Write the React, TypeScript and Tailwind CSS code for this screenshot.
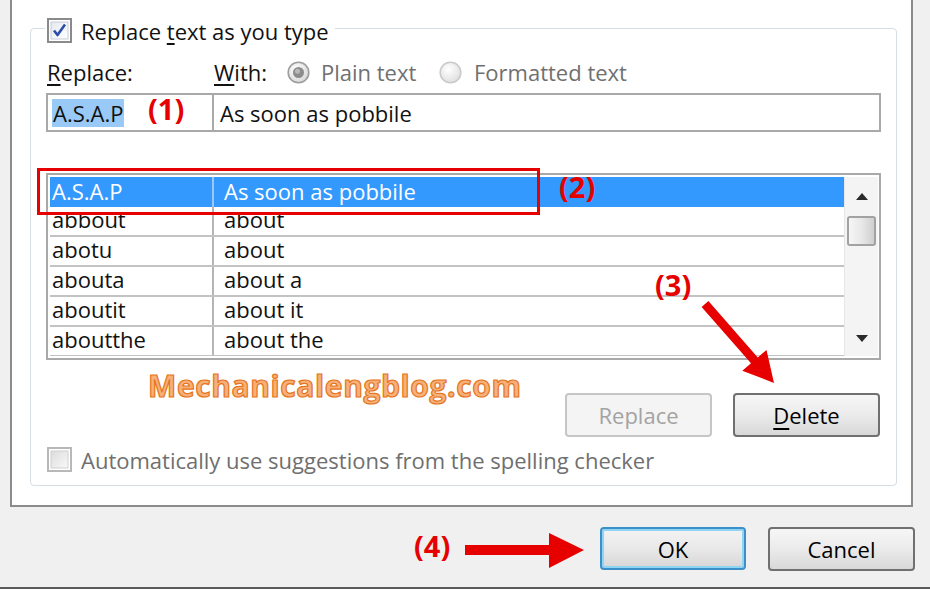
import React from "react";

// ── Data ─────────────────────────────────────────────────────────────

const rows: [string, string][] = [
  ["A.S.A.P", "As soon as pobbile"],
  ["abbout", "about"],
  ["abotu", "about"],
  ["abouta", "about a"],
  ["aboutit", "about it"],
  ["aboutthe", "about the"],
];

// ── Small controls ───────────────────────────────────────────────────

function CheckBox({ checked }: { checked?: boolean }) {
  return (
    <svg width="25" height="25" viewBox="0 0 25 25" className="shrink-0">
      <defs>
        <linearGradient id={checked ? "cbOn" : "cbOff"} x1="0" y1="0" x2="1" y2="1">
          <stop offset="0" stopColor={checked ? "#e4e9ef" : "#dcdcdc"} />
          <stop offset="1" stopColor={checked ? "#ffffff" : "#f8f8f8"} />
        </linearGradient>
      </defs>
      <rect x="1" y="1" width="23" height="23" fill="#fff" stroke={checked ? "#8a8a8a" : "#b8b8b8"} strokeWidth="2" />
      <rect x="4" y="4" width="17" height="17" fill={checked ? "url(#cbOn)" : "url(#cbOff)"} stroke={checked ? "#c5cdd8" : "#d0d0d0"} strokeWidth="1" />
      {checked && (
        <path d="M7 12.5 L10.5 17 L18 6.5" fill="none" stroke="#2c4ea8" strokeWidth="2.6" strokeLinejoin="round" />
      )}
    </svg>
  );
}

function Radio({ checked }: { checked?: boolean }) {
  return (
    <svg width="23" height="23" viewBox="0 0 23 23" className="shrink-0">
      <defs>
        <radialGradient id={checked ? "rOn" : "rOff"} cx="0.4" cy="0.35" r="0.7">
          <stop offset="0" stopColor="#ffffff" />
          <stop offset="1" stopColor={checked ? "#d6d6d6" : "#dedede"} />
        </radialGradient>
      </defs>
      <circle cx="11.5" cy="11.5" r="10.3" fill={checked ? "url(#rOn)" : "url(#rOff)"} stroke={checked ? "#9d9d9d" : "#cacaca"} strokeWidth="1.6" />
      {checked && (
        <>
          <circle cx="11.5" cy="11.5" r="5.5" fill="#8c8c8c" />
          <circle cx="10.5" cy="10.3" r="2.5" fill="#b9b9b9" />
        </>
      )}
    </svg>
  );
}

function Button({
  label,
  under,
  variant = "normal",
}: {
  label: string;
  under?: boolean;
  variant?: "normal" | "disabled" | "default";
}) {
  const first = label.slice(0, 1);
  const rest = label.slice(1);
  if (variant === "disabled") {
    return (
      <div className="flex h-[44px] w-[147px] items-center justify-center rounded-[4px] border-2 border-[#c4c6c8] bg-[#f4f4f4] text-[#a3a3a3]">
        {label}
      </div>
    );
  }
  if (variant === "default") {
    return (
      <div className="flex h-[43px] w-[146px] items-center justify-center rounded-[4px] border-2 border-[#3d8fc8] bg-gradient-to-b from-[#f3f3f3] via-[#e9e9e9] to-[#d6d6d6] text-black shadow-[inset_0_0_0_2px_#8fd3f5]">
        {label}
      </div>
    );
  }
  return (
    <div className="flex h-[44px] w-[147px] items-center justify-center rounded-[4px] border-2 border-[#707070] bg-gradient-to-b from-[#f6f6f6] via-[#ebebeb] to-[#d8d8d8] text-black">
      {under ? (
        <span>
          <span className="underline decoration-2 underline-offset-[4px]">{first}</span>
          {rest}
        </span>
      ) : (
        label
      )}
    </div>
  );
}

// ── Component ────────────────────────────────────────────────────────

export default function App() {
  return (
    <div className="relative h-[589px] w-[930px] overflow-hidden bg-[#f0f0f0] font-['Open_Sans',sans-serif] text-[22px] leading-none text-[#111]">
      {/* ════════════ Dialog panel ════════════ */}
      <div className="ml-[10px] h-[507px] w-[903px] border-x-2 border-b-2 border-[#8b8b8b] bg-white pl-[18px] pt-[28px]">
        {/* Group box */}
        <div className="relative flex h-[458px] w-[867px] flex-col rounded-[4px] border border-[#d5dde5] px-[15px] pt-[32px]">
          {/* Legend */}
          <div className="absolute left-[14px] top-[-11px] flex items-center gap-[9px] bg-white pl-[2px] pr-[6px]">
            <CheckBox checked />
            <span>
              Replace <span className="underline underline-offset-[3px]">t</span>ext as you type
            </span>
          </div>

          {/* Replace / With labels */}
          <div className="flex h-[22px] items-center">
            <span className="w-[168px] pl-px">
              <span className="underline underline-offset-[3px]">R</span>eplace:
            </span>
            <span className="w-[73px]">
              <span className="underline underline-offset-[3px]">W</span>ith:
            </span>
            <Radio checked />
            <span className="ml-[11px] w-[118px] text-[#707070]">Plain text</span>
            <Radio />
            <span className="ml-[12px] text-[#707070]">Formatted text</span>
          </div>

          {/* Input boxes */}
          <div className="mt-[10px] flex h-[39px] w-[835px] border-2 border-[#a9a9a9]">
            <div className="flex w-[166px] items-center border-r-2 border-[#a9a9a9] pl-[4px]">
              <span className="bg-[#99c9f6] px-px py-[3px]">A.S.A.P</span>
            </div>
            <div className="flex flex-1 items-center pl-[6px]">As soon as pobbile</div>
          </div>

          {/* Entries list */}
          <div className="mt-[41px] flex h-[187px] w-[835px] border-2 border-[#a9a9a9] py-[2px] pl-[2px] pr-px">
            <div className="flex flex-1 flex-col overflow-hidden">
              {rows.map(([from, to], i) =>
                i === 0 ? (
                  <div key={from} className="flex h-[30px] shrink-0 bg-[#3399ff] leading-[28px] text-white">
                    <div className="w-[164px] border-r-2 border-[#9cc8f5] pl-[2px]">{from}</div>
                    <div className="pl-[10px]">{to}</div>
                  </div>
                ) : (
                  <div key={from} className="flex h-[30px] shrink-0 border-b-2 border-[#c3c3c3] leading-[24px]">
                    <div className="w-[164px] border-r-2 border-[#b5b5b5] pl-[2px]">{from}</div>
                    <div className="pl-[10px]">{to}</div>
                  </div>
                ),
              )}
            </div>
            {/* Scrollbar */}
            <div className="relative flex w-[34px] flex-col items-center border-l border-[#e6e6e6] bg-[#f4f4f4]">
              <svg width="12" height="7" viewBox="0 0 12 7" className="mt-[16px]">
                <path d="M0 7 L6 0 L12 7 Z" fill="#2a2a2a" />
              </svg>
              <div className="mt-[16px] h-[30px] w-[29px] rounded-[3px] border-2 border-[#a2a2a2] bg-gradient-to-r from-[#f6f6f6] via-[#e8e8e8] to-[#cfcfcf]" />
              <svg width="12" height="7" viewBox="0 0 12 7" className="mt-auto mb-[14px]">
                <path d="M0 0 L12 0 L6 7 Z" fill="#2a2a2a" />
              </svg>
            </div>
          </div>

          {/* Replace / Delete buttons */}
          <div className="mt-[33px] flex justify-end gap-[21px] pr-px">
            <Button label="Replace" variant="disabled" />
            <Button label="Delete" under />
          </div>

          {/* Spelling checker option */}
          <div className="mt-[10px] flex items-center gap-[9px] pl-px text-[#6f6f6f]">
            <CheckBox />
            <span>Automatically use suggestions from the spelling checker</span>
          </div>

          {/* Watermark */}
          <div className="absolute left-[117px] top-[342px] font-['Open_Sans',sans-serif] text-[30px] font-bold leading-none tracking-[0.6px] text-[#f7b07a] [-webkit-text-stroke:1.2px_#e57520]">
            Mechanicalengblog.com
          </div>
        </div>
      </div>

      {/* ════════════ OK / Cancel ════════════ */}
      <div className="flex justify-end gap-[22px] pr-[15px] pt-[20px]">
        <Button label="OK" variant="default" />
        <Button label="Cancel" />
      </div>
      <div className="absolute bottom-0 left-0 h-[2px] w-full bg-[#5a5a5a]" />

      {/* ════════════ Annotations ════════════ */}
      <span className="absolute left-[148px] top-[93px] font-['Open_Sans',sans-serif] text-[29px] font-bold leading-[32px] text-[#e60000]">(1)</span>
      <div className="absolute left-[37px] top-[168px] h-[47px] w-[503px] border-[3px] border-[#e60000]" />
      <span className="absolute left-[559px] top-[171px] font-['Open_Sans',sans-serif] text-[29px] font-bold leading-[32px] text-[#e60000]">(2)</span>
      <span className="absolute left-[655px] top-[269px] font-['Open_Sans',sans-serif] text-[29px] font-bold leading-[32px] text-[#e60000]">(3)</span>
      <span className="absolute left-[414px] top-[530px] font-['Open_Sans',sans-serif] text-[29px] font-bold leading-[32px] text-[#e60000]">(4)</span>
      <svg className="pointer-events-none absolute left-0 top-0" width="930" height="589" viewBox="0 0 930 589">
        <polygon
          points="701.6,306.9 708.4,301.1 757.8,357.4 766.5,349.9 774,383 742.3,370.7 751,363.2"
          fill="#e60000"
        />
        <polygon points="465,545 549,545 549,533 584,550 549,568 549,555 465,555" fill="#e60000" />
      </svg>
    </div>
  );
}
